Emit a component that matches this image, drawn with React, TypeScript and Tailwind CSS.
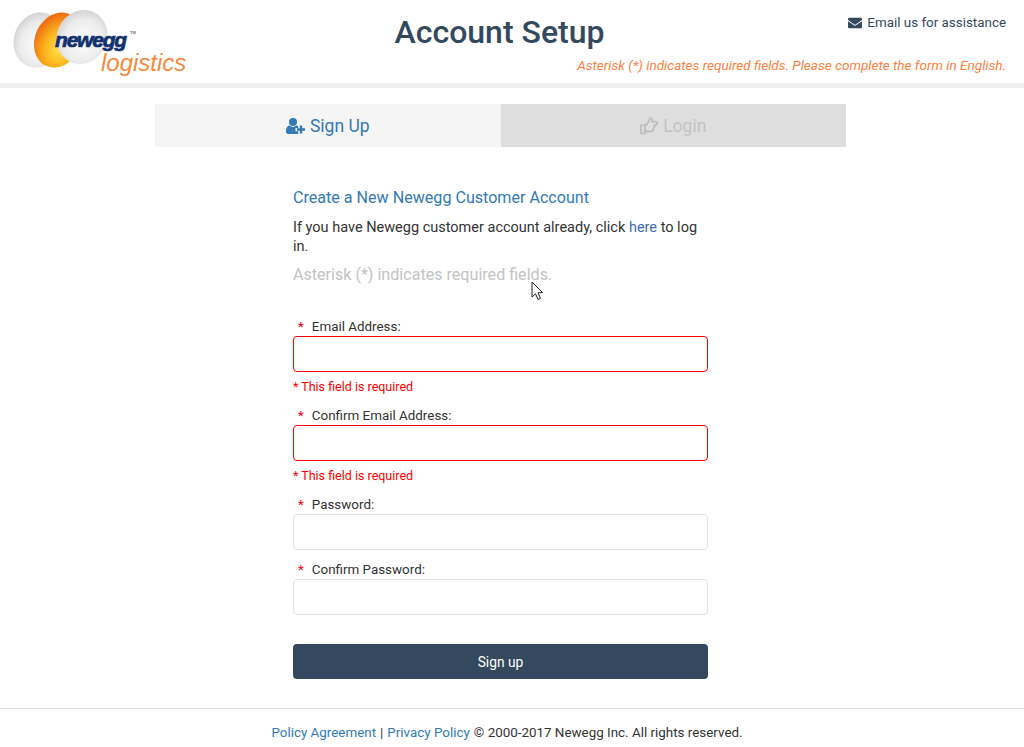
import { FaEnvelope } from 'react-icons/fa';

function Logo() {
  return (
    <div className="relative w-[190px] h-[80px] shrink-0">
      <svg width="190" height="80" viewBox="0 0 190 80" className="absolute left-0 top-0">
        <defs>
          <radialGradient id="shell" cx="0.55" cy="0.55" r="0.6">
            <stop offset="0" stopColor="#ffffff" />
            <stop offset="0.65" stopColor="#ececec" />
            <stop offset="1" stopColor="#cfcfcf" />
          </radialGradient>
          <radialGradient id="yolk" cx="0.62" cy="0.6" r="0.62">
            <stop offset="0" stopColor="#ffe94a" />
            <stop offset="0.55" stopColor="#fbb21c" />
            <stop offset="1" stopColor="#ee6f16" />
          </radialGradient>
        </defs>
        <ellipse cx="38" cy="40" rx="24" ry="28" fill="url(#shell)" transform="rotate(20 38 40)" />
        <ellipse cx="58" cy="40" rx="23" ry="28.5" fill="url(#yolk)" transform="rotate(25 58 40)" />
        <ellipse cx="82" cy="37" rx="25" ry="27.5" fill="url(#shell)" transform="rotate(25 82 37)" />
      </svg>
      <span className="absolute left-[55px] top-[28px] font-['Liberation_Sans',sans-serif] font-bold italic text-[21px] leading-[24px] tracking-[-1.2px] text-[#12306e] [-webkit-text-stroke:0.7px_#12306e]">
        newegg
      </span>
      <span className="absolute left-[130px] top-[30px] font-['Liberation_Sans',sans-serif] font-bold text-[4px] leading-[6px] text-[#777]">
        TM
      </span>
      <span className="absolute left-[101px] top-[48px] font-['Liberation_Sans',sans-serif] italic text-[24px] leading-[30px] text-[#f58a3c]">
        logistics
      </span>
    </div>
  );
}

function UserPlusIcon() {
  return (
    <svg width="19" height="16" viewBox="0 0 19 16" fill="#337ab7">
      <circle cx="7" cy="4" r="4" />
      <path d="M0 13.5C0 10 1.5 7.5 3.6 7.5c1 .9 2.2 1.4 3.4 1.4s2.400-.5 3.400-1.400c.7 0 1.300.2 1.800.7V10H9.500v3.200h2.700V16H2.200C.8 16 0 15 0 13.500z" />
      <path d="M13.800 7.500h2.400v2.800H19v2.400h-2.800v2.800h-2.400v-2.800H11v-2.400h2.800z" />
    </svg>
  );
}

function ThumbIcon() {
  return (
    <svg width="18" height="18" viewBox="0 0 18 18" fill="none" stroke="#bdbdbd" strokeWidth="1.700" strokeLinejoin="round">
      <path d="M1 8h4v8.500H1z" />
      <path d="M5 8.500c1.500-.5 3-2.500 4-4.500.5-1.200.3-3 1.600-3 1.500 0 1.800 2 1.200 3.600h3.900c1.900 0 1.900 3.200 0 3.200h-1.200c.6 1 .2 2-.6 2.400.3 1 0 1.900-.9 2.300.2 1.200-.5 1.900-1.600 1.900h-3.400c-1.500 0-2.500-.7-4-1" />
    </svg>
  );
}

function Field({ label, error }: { label: string; error?: boolean }) {
  return (
    <div>
      <label className="block h-[20px] pl-[5px] text-[13.4px] leading-[22px] text-[#333]">
        <span className="text-[#ff0000] mr-[8px]">*</span>
        {label}
      </label>
      <input
        className={`block w-full h-[36px] rounded-[4px] bg-white border ${
          error ? 'border-[#ff0000]' : 'border-[#e3e3e3]'
        }`}
      />
      {error ? <p className="mt-[6px] h-[18px] text-[12.500px] leading-[18px] text-[#ff0000]">* This field is required</p> : null}
    </div>
  );
}

export default function App() {
  return (
    <div className="relative w-[1024px] h-[747px] overflow-hidden bg-white font-['Roboto',sans-serif] flex flex-col">
      <header className="h-[88px] shrink-0 flex border-b-[5px] border-[#eeeeee] relative">
        <Logo />
        <h1 className="absolute left-0 right-[25px] top-[13px] text-center text-[32px] leading-[38px] font-medium text-[#34495e]">
          Account Setup
        </h1>
        <div className="ml-auto pr-[18px] pt-[14px] flex flex-col items-end">
          <a className="flex items-center gap-[5px] text-[13.400px] leading-[18px] text-[#34495e]">
            <FaEnvelope className="w-[14px] h-[14px]" />
            Email us for assistance
          </a>
          <p className="mt-[23px] text-[13.550px] leading-[20px] italic text-[#ff7f41]">
            Asterisk (*) indicates required fields. Please complete the form in English.
          </p>
        </div>
      </header>

      <main className="flex-1 flex flex-col items-center pt-[16px] pr-[23px]">
        <div className="w-[691px] h-[43px] flex text-[17.500px] leading-[24px]">
          <div className="w-1/2 flex items-center justify-center gap-[5px] bg-[#f5f5f5] text-[#337ab7]">
            <UserPlusIcon />
            <span className="pt-[1px]">Sign Up</span>
          </div>
          <div className="w-1/2 flex items-center justify-center gap-[5px] bg-[#dedede] text-[#c4c4c4]">
            <ThumbIcon />
            <span className="pt-[1px]">Login</span>
          </div>
        </div>

        <div className="w-[415px] mt-[41px]">
          <h2 className="text-[16.100px] leading-[20px] text-[#337ab7]">Create a New Newegg Customer Account</h2>
          <p className="mt-[10px] text-[14.500px] leading-[19px] text-[#333]">
            If you have Newegg customer account already, click <a className="text-[#3a6db5]">here</a> to log in.
          </p>
          <p className="mt-[9px] text-[16.100px] leading-[20px] text-[#c4c4c4]">Asterisk (*) indicates required fields.</p>

          <form className="mt-[31px] flex flex-col gap-[9px]">
            <Field label="Email Address:" error />
            <Field label="Confirm Email Address:" error />
            <Field label="Password:" />
            <Field label="Confirm Password:" />
            <button
              type="button"
              className="mt-[20px] h-[35px] pt-[1px] rounded-[4px] bg-[#34495e] text-white text-[13.800px]"
            >
              Sign up
            </button>
          </form>
        </div>
      </main>

      <footer className="h-[39px] shrink-0 border-t border-[#dddddd] flex items-center justify-center pt-[10px] pr-[10px] text-[13.400px] text-[#333]">
        <a className="text-[#337ab7]">Policy Agreement</a>
        <span className="mx-[4px]">|</span>
        <a className="text-[#337ab7]">Privacy Policy</a>
        <span className="ml-[4px]">© 2000-2017 Newegg Inc. All rights reserved.</span>
      </footer>

      <svg width="16" height="22" viewBox="0 0 16 22" className="absolute left-[531px] top-[281px]">
        <path d="M1 1 L1 16 L4.500 12.800 L7 18.500 L9.500 17.400 L7 11.800 L11.600 11.600 Z" fill="#fff" stroke="#222" strokeWidth="1" />
      </svg>
    </div>
  );
}
